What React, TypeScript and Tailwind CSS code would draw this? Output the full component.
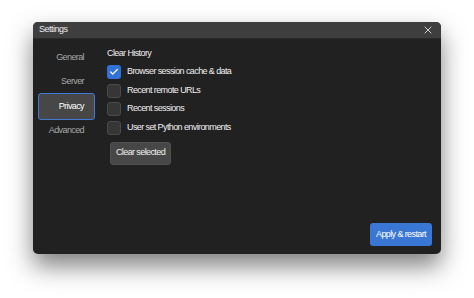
import { Check, X } from "lucide-react";

const navItems = ["General", "Server", "Privacy", "Advanced"];

const historyItems = [
  { label: "Browser session cache & data", checked: true },
  { label: "Recent remote URLs", checked: false },
  { label: "Recent sessions", checked: false },
  { label: "User set Python environments", checked: false },
];

export default function App() {
  return (
    <div
      className="h-[298px] w-[474px] bg-white pl-[33px] pt-[22px]"
      style={{ fontFamily: '"Liberation Sans", Arial, sans-serif' }}
    >
      <div className="flex h-[232px] w-[408px] flex-col overflow-hidden rounded-[5px] bg-[#212121] shadow-[0_12px_24px_rgba(0,0,0,0.5)]">
        {/* title bar */}
        <div className="flex h-[17px] items-center justify-between border-b border-[#2a2a2a] bg-[#3e3e3e] pl-[6px] pr-[7px]">
          <span className="text-[9px] tracking-[-0.5px] text-[#ececec]">Settings</span>
          <X className="h-[12px] w-[12px] text-[#e0e0e0]" strokeWidth={1.8} />
        </div>

        <div className="flex flex-1 text-[9px] tracking-[-0.6px]">
          {/* sidebar */}
          <div className="flex w-[74px] flex-col pl-[5px] pt-[6px]">
            {navItems.map((item) =>
              item === "Privacy" ? (
                <div
                  key={item}
                  className="-my-[1px] flex h-[26.5px] w-[57px] items-center justify-end rounded-[3px] border-[1.5px] border-[#3f7bd6] bg-[#474747] pr-[10px] text-white"
                >
                  {item}
                </div>
              ) : (
                <div
                  key={item}
                  className="flex h-[24.5px] w-[57px] items-center justify-end pr-[11px] text-[#a8a8a8]"
                >
                  {item}
                </div>
              )
            )}
          </div>

          {/* content */}
          <div className="flex flex-1 flex-col pt-[8px]">
            <div className="leading-[12px] text-[#f0f0f0]">Clear History</div>
            <div className="mt-[6px] flex flex-col gap-[4.5px]">
              {historyItems.map((item) => (
                <label key={item.label} className="flex items-center gap-[6px]">
                  {item.checked ? (
                    <span className="flex h-[14px] w-[14px] items-center justify-center rounded-[3px] bg-[#3272d8]">
                      <Check className="h-[10px] w-[10px] text-white" strokeWidth={3} />
                    </span>
                  ) : (
                    <span className="h-[14px] w-[14px] rounded-[3px] border border-[#4a4a4a] bg-[#363636]" />
                  )}
                  <span className="text-[#f0f0f0]">{item.label}</span>
                </label>
              ))}
            </div>
            <button className="ml-[3px] mt-[7px] h-[23px] w-[61px] rounded-[3px] border border-[#505050] bg-[#474747] text-[#f2f2f2]">
              Clear selected
            </button>
          </div>
        </div>

        <div className="flex justify-end pb-[8px] pr-[9px]">
          <button className="h-[23px] w-[62px] rounded-[3px] bg-[#3a77d4] text-[9px] tracking-[-0.6px] text-white">
            Apply &amp; restart
          </button>
        </div>
      </div>
    </div>
  );
}
